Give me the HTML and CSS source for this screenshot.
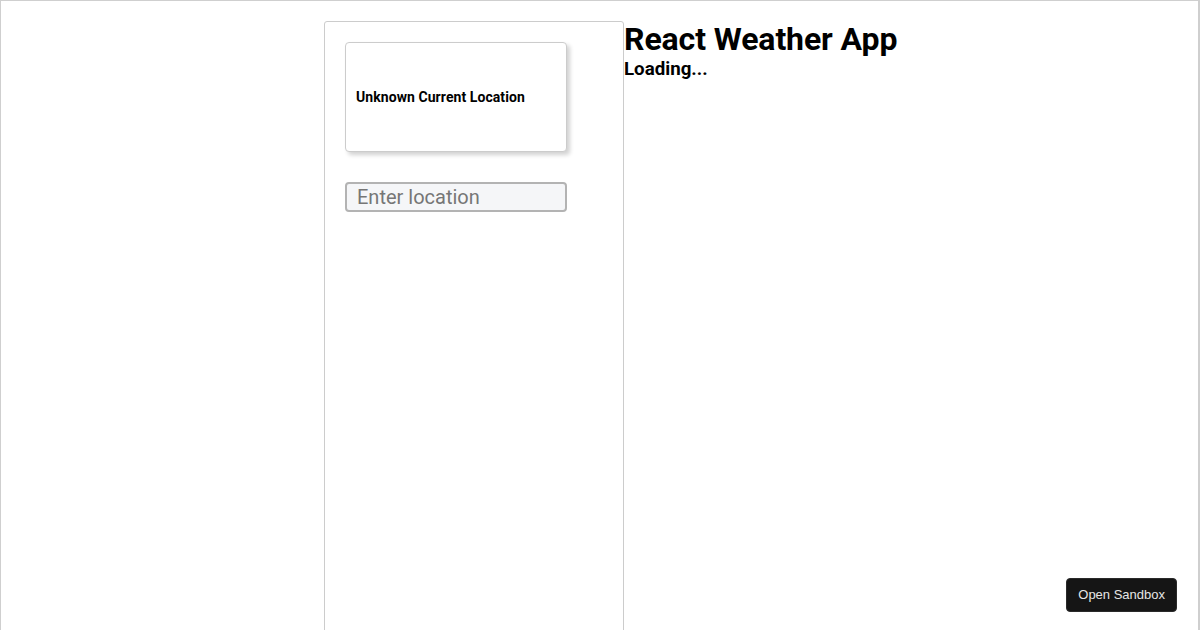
FILE: index.html
```html
<!DOCTYPE html>
<html lang="en">
<head>
<meta charset="utf-8">
<title>React Weather App</title>
<link rel="stylesheet" href="styles.css">
</head>
<body>
<div class="frame">
  <div class="app">
    <aside class="sidebar">
      <div class="card">
        <span class="card-title">Unknown Current Location</span>
      </div>
      <input class="search" type="text" placeholder="Enter location">
    </aside>
    <main class="main">
      <h1 class="title">React Weather App</h1>
      <h3 class="status">Loading...</h3>
    </main>
  </div>
  <button class="sandbox-btn">Open Sandbox</button>
</div>
</body>
</html>
```

FILE: styles.css
```css
html, body {
  margin: 0;
  padding: 0;
  background: #fff;
}

body {
  font-family: Roboto, "Liberation Sans", sans-serif;
  color: #000;
}

.frame {
  box-sizing: border-box;
  width: 1200px;
  height: 660px;
  border: 1px solid #cfcfcf;
  border-right-width: 2px;
  overflow: hidden;
}

.app {
  display: flex;
  align-items: flex-start;
  padding: 20px 0 0 323px;
}

.sidebar {
  box-sizing: border-box;
  width: 300px;
  height: 700px;
  border: 1px solid #cccccc;
  border-radius: 3px 3px 0 0;
  padding: 20px;
  display: flex;
  flex-direction: column;
  gap: 30px;
}

.card {
  box-sizing: border-box;
  width: 222px;
  height: 110px;
  border: 1px solid #cccccc;
  border-radius: 4px;
  padding: 0 10px;
  display: flex;
  align-items: center;
  box-shadow: 3px 3px 4px rgba(0, 0, 0, 0.18);
  background: #fff;
}

.card-title {
  font-size: 14px;
  font-weight: 700;
  letter-spacing: 0.07px;
}

.search {
  box-sizing: border-box;
  width: 222px;
  height: 30px;
  border: 2px solid #b3b3b3;
  border-radius: 4px;
  background: #f5f6f8;
  padding: 0 10px;
  font-family: Roboto, "Liberation Sans", sans-serif;
  font-size: 20px;
  color: #333;
  outline: none;
}

.search::placeholder {
  color: #767676;
}

.main {
  display: flex;
  flex-direction: column;
}

.title {
  margin: 0;
  font-size: 32px;
  font-weight: 700;
  line-height: 37px;
  letter-spacing: -0.1px;
}

.status {
  margin: 0;
  font-size: 18.72px;
  font-weight: 700;
  line-height: 22px;
}

.sandbox-btn {
  position: fixed;
  right: 23px;
  bottom: 18px;
  box-sizing: border-box;
  height: 34px;
  padding: 0 11px 1px;
  background: #151515;
  color: #e6e6e6;
  border: 1px solid #2a2a2a;
  border-radius: 4px;
  font-family: "Liberation Sans", Arial, sans-serif;
  font-size: 13px;
  cursor: pointer;
}
```
